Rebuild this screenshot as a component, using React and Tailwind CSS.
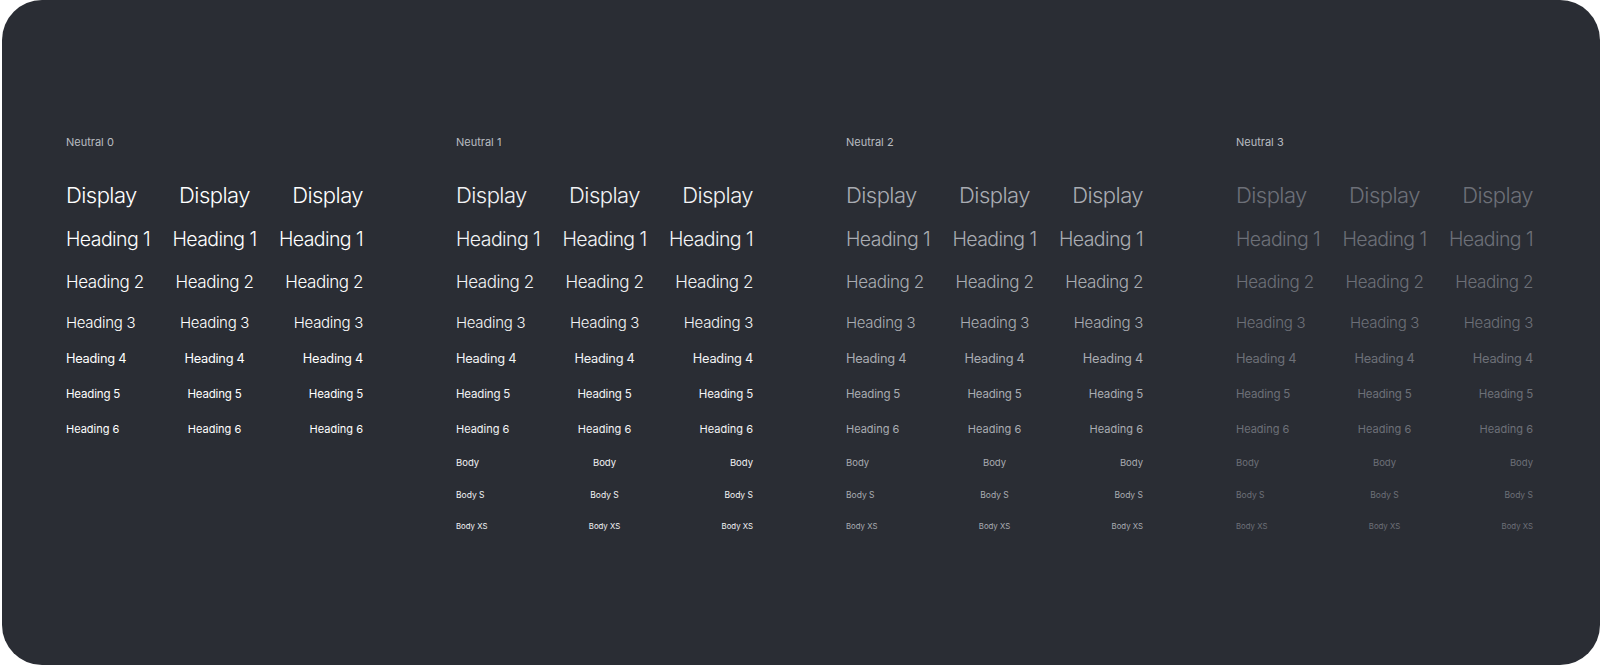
const rows = [
  ["Display", "h-[46px] text-[22px] tracking-[-0.025em] font-light", ""],
  ["Heading 1", "h-[43px] text-[19.5px] tracking-[-0.03em] font-light", ""],
  ["Heading 2", "h-[42px] text-[17px] tracking-[-0.025em] font-light", ""],
  ["Heading 3", "h-[38px] text-[15px] tracking-[-0.02em] font-light", ""],
  ["Heading 4", "h-[37px] text-[12.8px] tracking-[-0.02em]", ""],
  ["Heading 5", "h-[34px] text-[11.5px] tracking-[-0.015em]", ""],
  ["Heading 6", "h-[34px] text-[11px]", ""],
  ["Body", "h-[33px] text-[9.5px]", "b"],
  ["Body S", "h-[32px] text-[8.5px]", "b"],
  ["Body XS", "h-[32px] text-[7.8px]", "b"],
];

const groups = [
  ["Neutral 0", "text-white", false],
  ["Neutral 1", "text-[#f2f3f5]", true],
  ["Neutral 2", "text-[#a9acb2]", true],
  ["Neutral 3", "text-[#6d7078]", true],
];

function Group({ label, color, body }) {
  return (
    <div className="w-[297px] flex flex-col">
      <div className="h-[20px] flex items-center text-[11px] text-[#b9bcc1]">{label}</div>
      <div className="h-[20px]" />
      {rows.filter(r => body || !r[2]).map(([t, cls]) => (
        <div key={t} className={`grid grid-cols-3 items-center leading-none whitespace-nowrap ${cls} ${color}`}>
          <div className="text-left">{t}</div>
          <div className="text-center">{t}</div>
          <div className="text-right">{t}</div>
        </div>
      ))}
    </div>
  );
}

export default function App() {
  return (
    <div className="w-[1600px] h-[665px] bg-white" style={{ fontFamily: "Inter, 'Noto Sans', sans-serif" }}>
      <div className="ml-[2px] w-[1598px] h-[665px] bg-[#2a2d34] rounded-[40px] pt-[132px] pl-[64px] flex gap-[93px] items-start">
        {groups.map(([l, c, b]) => <Group key={l} label={l} color={c} body={b} />)}
      </div>
    </div>
  );
}
